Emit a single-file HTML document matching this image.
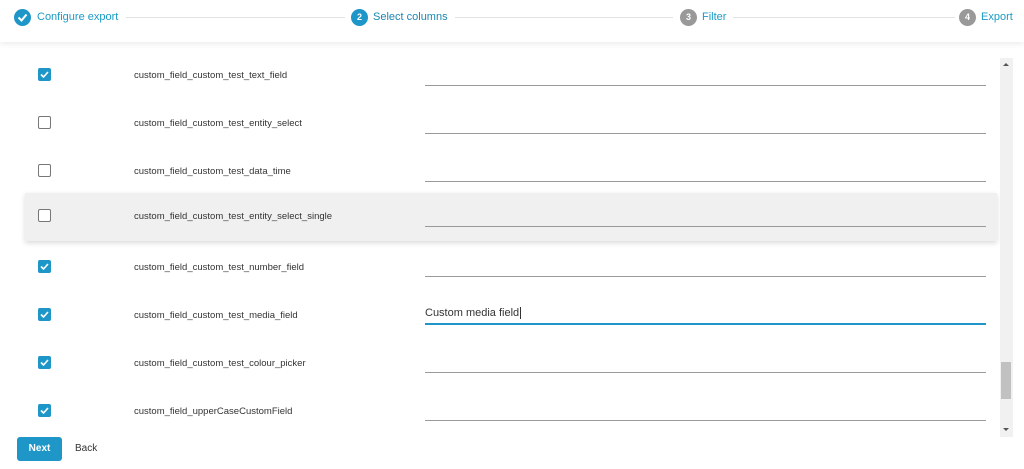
<!DOCTYPE html>
<html><head><style>
*{margin:0;padding:0;box-sizing:border-box}
body{width:1024px;height:469px;background:#fff;font-family:"Liberation Sans",sans-serif;position:relative;overflow:hidden}
.hdr{position:absolute;left:0;top:0;width:1024px;height:42px;background:#fff;box-shadow:0 2px 6px rgba(0,0,0,.08)}
.c{position:absolute;width:17px;height:17px;border-radius:50%;color:#fff;font-size:9px;text-align:center;line-height:17px;font-weight:bold}
.st{position:absolute;top:11px;font-size:11px;color:#1a9bc6}
.ln{position:absolute;top:17px;height:1px;background:#e2e2e2}
.cb{position:absolute;left:38px;width:13px;height:13px;border-radius:2px}
.on{background:#1e96c8}
.off{border:1.5px solid #777;background:#fff}
.lbl{position:absolute;left:134px;font-size:9.5px;color:#333}
.inp{position:absolute;left:425px;width:561px;height:1px;background:#9a9a9a}
</style></head><body>
<div class="hdr">
<div class="c" style="left:14px;top:9px;background:#1e96c8"><svg width="17" height="17"><path d="M4.5 8.5l3 3 5-6" stroke="#fff" stroke-width="2" fill="none"/></svg></div>
<div class="st" style="left:37px">Configure export</div>
<div class="ln" style="left:126px;width:219px"></div>
<div class="c" style="left:351px;top:9px;background:#1e96c8">2</div>
<div class="st" style="left:373px;color:#1a86b0">Select columns</div>
<div class="ln" style="left:455px;width:218px"></div>
<div class="c" style="left:680px;top:9px;background:#999">3</div>
<div class="st" style="left:702px">Filter</div>
<div class="ln" style="left:733px;width:222px"></div>
<div class="c" style="left:959px;top:9px;background:#999">4</div>
<div class="st" style="left:981px">Export</div>
</div>
<div style="position:absolute;left:25px;top:193px;width:972px;height:48px;background:#f0f0f0;box-shadow:0 2px 5px rgba(0,0,0,.15)"></div>

<div class="cb on" style="top:68px"><svg width="13" height="13"><path d="M3 6.5l2.5 2.5 4.5-5" stroke="#fff" stroke-width="1.6" fill="none"/></svg></div>
<div class="lbl" style="top:70px">custom_field_custom_test_text_field</div><div class="inp" style="top:85px"></div>
<div class="cb off" style="top:116px"></div>
<div class="lbl" style="top:118px">custom_field_custom_test_entity_select</div><div class="inp" style="top:133px"></div>
<div class="cb off" style="top:164px"></div>
<div class="lbl" style="top:166px">custom_field_custom_test_data_time</div><div class="inp" style="top:181px"></div>
<div class="cb off" style="top:209px"></div>
<div class="lbl" style="top:211px">custom_field_custom_test_entity_select_single</div><div class="inp" style="top:226px"></div>
<div class="cb on" style="top:260px"><svg width="13" height="13"><path d="M3 6.5l2.5 2.5 4.5-5" stroke="#fff" stroke-width="1.6" fill="none"/></svg></div>
<div class="lbl" style="top:262px">custom_field_custom_test_number_field</div><div class="inp" style="top:276px"></div>
<div class="cb on" style="top:308px"><svg width="13" height="13"><path d="M3 6.5l2.5 2.5 4.5-5" stroke="#fff" stroke-width="1.6" fill="none"/></svg></div>
<div class="lbl" style="top:310px">custom_field_custom_test_media_field</div>
<div style="position:absolute;left:425px;top:307px;font-size:11px;color:#333">Custom media field<span style="border-left:1px solid #333;margin-left:1px"></span></div>
<div class="inp" style="top:323px;height:2px;background:#1e96c8"></div>
<div class="cb on" style="top:356px"><svg width="13" height="13"><path d="M3 6.5l2.5 2.5 4.5-5" stroke="#fff" stroke-width="1.6" fill="none"/></svg></div>
<div class="lbl" style="top:358px">custom_field_custom_test_colour_picker</div><div class="inp" style="top:372px"></div>
<div class="cb on" style="top:404px"><svg width="13" height="13"><path d="M3 6.5l2.5 2.5 4.5-5" stroke="#fff" stroke-width="1.6" fill="none"/></svg></div>
<div class="lbl" style="top:406px">custom_field_upperCaseCustomField</div><div class="inp" style="top:420px"></div>

<div style="position:absolute;left:1000px;top:58px;width:13px;height:379px;background:#f1f1f1"></div>
<div style="position:absolute;left:1003px;top:63px;width:0;height:0;border-left:3px solid transparent;border-right:3px solid transparent;border-bottom:3px solid #555"></div>
<div style="position:absolute;left:1001px;top:362px;width:10px;height:37px;background:#c1c1c1"></div>
<div style="position:absolute;left:1003px;top:428px;width:0;height:0;border-left:3px solid transparent;border-right:3px solid transparent;border-top:3px solid #555"></div>

<div style="position:absolute;left:17px;top:437px;width:45px;height:24px;background:#1e96c8;border-radius:3px;color:#fff;font-size:10px;font-weight:bold;text-align:center;line-height:24px">Next</div>
<div style="position:absolute;left:75px;top:443px;font-size:10px;color:#333">Back</div>
</body></html>
